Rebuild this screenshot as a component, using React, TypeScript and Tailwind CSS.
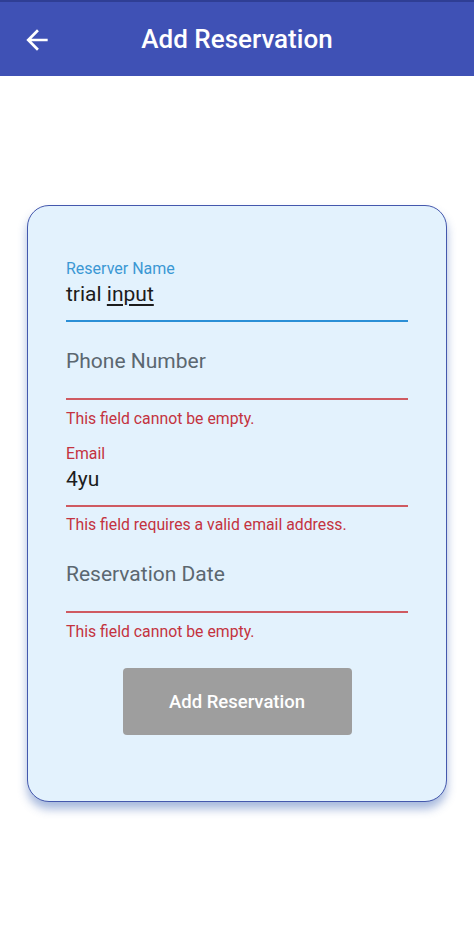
import React from 'react';

function ArrowBack() {
  return (
    <svg width="32" height="32" viewBox="0 0 24 24" fill="white">
      <path d="M20 11H7.83l5.59-5.59L12 4l-8 8 8 8 1.41-1.41L7.83 13H20v-2z" />
    </svg>
  );
}

function App() {
  return (
    <div className="min-h-screen w-full bg-white font-['Roboto',sans-serif]">
      {/* APP BAR */}
      <header className="bg-[#3f51b5]">
        <div className="h-[2px] bg-[#2f3e94]" />
        <div className="relative flex items-center justify-center h-[74px]">
          <button className="absolute left-[21px] top-[22px]">
            <ArrowBack />
          </button>
          <h1 className="text-white text-[26px] font-medium pt-[1px]">Add Reservation</h1>
        </div>
      </header>

      {/* CARD */}
      <main className="flex justify-center pt-[129px]">
        <div className="w-[420px] bg-[#e3f2fd] border-[1.5px] border-[#4458ad] rounded-[22px] shadow-[0_7px_10px_rgba(60,100,180,0.45)] px-[38px] pt-[54px] pb-[66px]">
          {/* Reserver Name (focused) */}
          <div className="text-[16px] leading-[18px] text-[#3b98d4]">Reserver Name</div>
          <div className="mt-[4px] text-[21px] leading-[24px] text-[#1c1c1c]">
            trial <span className="underline underline-offset-[3px] decoration-[1.5px]">input</span>
          </div>
          <div className="mt-[14px] h-[2px] bg-[#2b8fd6]" />

          {/* Phone Number */}
          <div className="mt-[27px] text-[21px] leading-[24px] text-[#5b6770]">Phone Number</div>
          <div className="mt-[25px] h-[2px] bg-[#cf5a61]" />
          <div className="mt-[10px] text-[15.8px] leading-[18px] text-[#c43340]">This field cannot be empty.</div>

          {/* Email */}
          <div className="mt-[17px] text-[15.8px] leading-[18px] text-[#c43340]">Email</div>
          <div className="mt-[4px] text-[21px] leading-[24px] text-[#1c1c1c]">4yu</div>
          <div className="mt-[14px] h-[2px] bg-[#cf5a61]" />
          <div className="mt-[9px] text-[15.8px] leading-[18px] text-[#c43340]">This field requires a valid email address.</div>

          {/* Reservation Date */}
          <div className="mt-[28px] text-[21px] leading-[24px] text-[#5b6770]">Reservation Date</div>
          <div className="mt-[25px] h-[2px] bg-[#cf5a61]" />
          <div className="mt-[10px] text-[15.8px] leading-[18px] text-[#c43340]">This field cannot be empty.</div>

          <div className="mt-[27px] flex justify-center">
            <button className="w-[229px] h-[67px] rounded-[4px] bg-[#9e9e9e] text-white text-[18.5px] font-medium pt-[3px]">
              Add Reservation
            </button>
          </div>
        </div>
      </main>
    </div>
  );
}

export default App;
